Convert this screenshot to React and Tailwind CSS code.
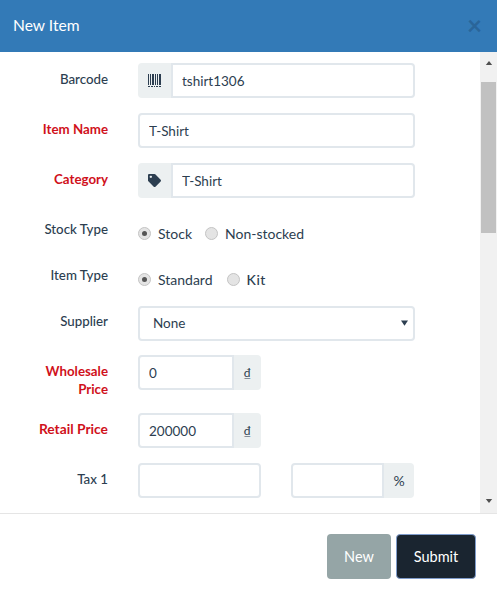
import React from "react";
import { FaTag } from "react-icons/fa";

const inputCls =
  "h-[35px] min-w-0 flex-1 border-2 border-[#e1e7ec] bg-white px-[9px] text-[13.5px] text-[#2c3e50] outline-none";
const addonCls =
  "flex h-[35px] shrink-0 items-center justify-center rounded-[4px] bg-[#ecf0f1] text-[#2c3e50]";

const Label = ({ children, required, className = "" }) => (
  <div
    className={`w-[108px] shrink-0 pl-[30px] text-right text-[13.3px] leading-[18px] ${
      required ? "font-bold text-[#d0111b]" : "font-medium text-[#2c3e50]"
    } ${className}`}
  >
    {children}
  </div>
);

const Radio = ({ checked, label, className = "" }) => (
  <label className={`flex items-center text-[14px] text-[#2c3e50] ${className}`}>
    <span className="mr-[7px] flex h-[13px] w-[13px] items-center justify-center rounded-full border border-[#c4c4c4] bg-[#e4e4e4]">
      {checked && <span className="h-[5px] w-[5px] rounded-full bg-[#555555]" />}
    </span>
    {label}
  </label>
);

const Row = ({ children, className = "" }) => (
  <div className={`flex ${className}`}>{children}</div>
);

const BarcodeIcon = () => (
  <svg viewBox="0 0 13 14" className="h-[14px] w-[13px] fill-[#2c3e50]">
    <path d="M0 0h1v11H0zM2 0h1v11H2zM4 0h2v11H4zM7 0h1v11H7zM9 0h1v11H9zM11 0h2v11h-2zM0 12h2v1H0zM3 12h2v1H3zM6 12h1v1H6zM8 12h2v1H8zM11 12h2v1h-2z" />
  </svg>
);

const App = () => {
  return (
    <div className="flex h-[592px] w-[497px] flex-col overflow-hidden bg-white font-['Lato',sans-serif]">
      <div className="flex h-[52px] shrink-0 items-center justify-between bg-[#337ab7] pl-[13px] pr-[15px]">
        <h4 className="text-[15.6px] text-white">New Item</h4>
        <span className="mb-[3px] text-[26px] font-bold leading-none text-[#2a659a]">×</span>
      </div>

      <div className="flex h-[461px] shrink-0">
        <div className="flex-1 overflow-hidden pt-[11px]">
          <Row className="mb-[15px]">
            <Label className="mt-[7px]">Barcode</Label>
            <div className="ml-[30px] flex w-[277px]">
              <span className={`${addonCls} w-[33px] rounded-r-none`}>
                <BarcodeIcon />
              </span>
              <input readOnly defaultValue="tshirt1306" className={`${inputCls} rounded-r-[4px]`} />
            </div>
          </Row>

          <Row className="mb-[15px]">
            <Label required className="mt-[7px]">Item Name</Label>
            <div className="ml-[30px] flex w-[277px]">
              <input readOnly defaultValue="T-Shirt" className={`${inputCls} rounded-[4px]`} />
            </div>
          </Row>

          <Row className="mb-[22px]">
            <Label required className="mt-[7px]">Category</Label>
            <div className="ml-[30px] flex w-[277px]">
              <span className={`${addonCls} w-[33px] rounded-r-none`}>
                <FaTag size={13} />
              </span>
              <input readOnly defaultValue="T-Shirt" className={`${inputCls} rounded-r-[4px]`} />
            </div>
          </Row>

          <Row className="mb-[22px]">
            <Label>Stock Type</Label>
            <div className="ml-[30px] mt-[3px] flex">
              <Radio checked label="Stock" />
              <Radio label="Non-stocked" className="ml-[13px]" />
            </div>
          </Row>

          <Row className="mb-[16px]">
            <Label>Item Type</Label>
            <div className="ml-[30px] mt-[3px] flex">
              <Radio checked label="Standard" />
              <Radio label="Kit" className="ml-[14px] font-medium tracking-[0.5px]" />
            </div>
          </Row>

          <Row className="mb-[14px]">
            <Label className="mt-[6px]">Supplier</Label>
            <div className="relative ml-[30px] w-[277px]">
              <select className="h-[35px] w-full appearance-none rounded-[4px] border-2 border-[#e1e7ec] bg-white pl-[13px] text-[13.5px] text-[#2c3e50] outline-none">
                <option>None</option>
              </select>
              <svg viewBox="0 0 8 6" className="absolute right-[7px] top-[14px] h-[6px] w-[7px] fill-[#2c3e50]">
                <path d="M0 0h8L4 6z" />
              </svg>
            </div>
          </Row>

          <Row className="mb-[15px]">
            <Label required className="mt-[7px]">Wholesale Price</Label>
            <div className="ml-[30px] flex w-[123px]">
              <input readOnly defaultValue="0" className={`${inputCls} rounded-l-[4px]`} />
              <span className={`${addonCls} w-[27px] rounded-l-none text-[12px]`}>₫</span>
            </div>
          </Row>

          <Row className="mb-[15px]">
            <Label required className="mt-[7px] text-[13.8px]">Retail Price</Label>
            <div className="ml-[30px] flex w-[123px]">
              <input readOnly defaultValue="200000" className={`${inputCls} rounded-l-[4px]`} />
              <span className={`${addonCls} w-[27px] rounded-l-none text-[12px]`}>₫</span>
            </div>
          </Row>

          <Row>
            <Label className="mt-[7px]">Tax 1</Label>
            <div className="ml-[30px] flex w-[123px]">
              <input readOnly className={`${inputCls} rounded-[4px]`} />
            </div>
            <div className="ml-[30px] flex w-[123px]">
              <input readOnly className={`${inputCls} rounded-l-[4px]`} />
              <span className={`${addonCls} w-[30px] rounded-l-none text-[14px]`}>%</span>
            </div>
          </Row>
        </div>

        {/* scrollbar */}
        <div className="flex w-[17px] shrink-0 flex-col items-center bg-[#f1f1f1]">
          <svg viewBox="0 0 8 5" className="mt-[9px] h-[4px] w-[8px] fill-[#505050]">
            <path d="M4 0l4 5H0z" />
          </svg>
          <div className="mt-[17px] h-[151px] w-[15px] bg-[#c1c1c1]" />
          <svg viewBox="0 0 8 5" className="mt-[266px] h-[4px] w-[8px] fill-[#505050]">
            <path d="M0 0h8L4 5z" />
          </svg>
        </div>
      </div>

      <div className="flex flex-1 items-start justify-end gap-[5px] border-t border-[#e5e5e5] pr-[21px] pt-[20px]">
        <button className="h-[45px] w-[64px] rounded-[4px] bg-[#95a5a6] text-[14.5px] text-white">New</button>
        <button className="h-[45px] w-[80px] rounded-[4px] border border-[#7f9ccb] bg-[#1a2530] text-[14.5px] text-white">
          Submit
        </button>
      </div>
    </div>
  );
};

export default App;
